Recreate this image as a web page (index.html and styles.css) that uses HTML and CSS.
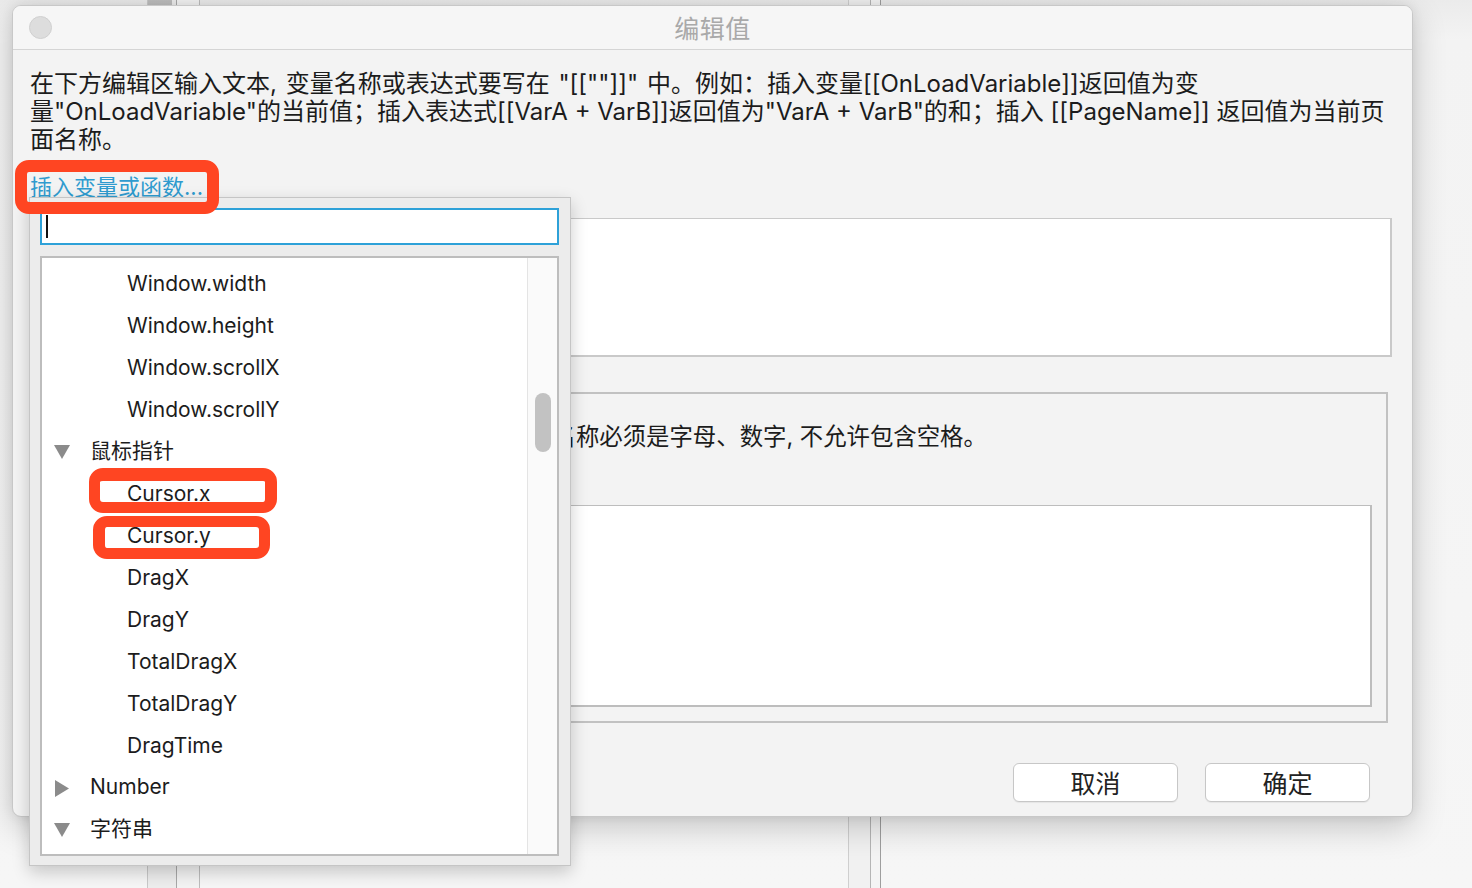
FILE: index.html
```html
<!DOCTYPE html>
<html lang="zh-CN">
<head>
<meta charset="utf-8">
<title>编辑值</title>
<link rel="stylesheet" href="styles.css">
</head>
<body>
<div class="desktop">
  <div class="backwin backwin-a"></div>
  <div class="backwin backwin-b"></div>

  <section class="dialog">
    <header class="titlebar">
      <span class="close-dot"></span>
      <h1 class="title">编辑值</h1>
      <span></span>
    </header>
    <div class="dialog-body">
      <p class="hint">
        <span class="hint-line">在下方编辑区输入文本, 变量名称或表达式要写在 "[[""]]" 中。例如：插入变量[[OnLoadVariable]]返回值为变</span>
        <span class="hint-line">量"OnLoadVariable"的当前值；插入表达式[[VarA + VarB]]返回值为"VarA + VarB"的和；插入 [[PageName]] 返回值为当前页</span>
        <span class="hint-line">面名称。</span>
      </p>
      <a class="insert-link" href="#">插入变量或函数...</a>
      <div class="text-editor"></div>
      <div class="locals">
        <p class="locals-note">在下方创建用于插入变量值的局部变量, 局部变量名称必须是字母、数字, 不允许包含空格。</p>
        <div class="locals-editor"></div>
      </div>
      <div class="actions">
        <button class="btn" type="button">取消</button>
        <button class="btn" type="button">确定</button>
      </div>
    </div>
  </section>

  <div class="picker">
    <div class="search"><span class="caret"></span></div>
    <div class="tree">
      <ul class="tree-rows">
        <li class="row child">Window.width</li>
        <li class="row child">Window.height</li>
        <li class="row child">Window.scrollX</li>
        <li class="row child">Window.scrollY</li>
        <li class="row group"><svg class="twisty" width="16" height="14" viewBox="0 0 16 14"><path d="M0 0H16L8 14Z" fill="#8b8b8b"/></svg><span class="group-label">鼠标指针</span></li>
        <li class="row child">Cursor.x</li>
        <li class="row child">Cursor.y</li>
        <li class="row child">DragX</li>
        <li class="row child">DragY</li>
        <li class="row child">TotalDragX</li>
        <li class="row child">TotalDragY</li>
        <li class="row child">DragTime</li>
        <li class="row group"><svg class="twisty" width="16" height="17" viewBox="0 0 16 17"><path d="M1 0V17L15 8.5Z" fill="#8b8b8b"/></svg><span class="group-label">Number</span></li>
        <li class="row group"><svg class="twisty" width="16" height="14" viewBox="0 0 16 14"><path d="M0 0H16L8 14Z" fill="#8b8b8b"/></svg><span class="group-label">字符串</span></li>
      </ul>
      <div class="scrollbar"><span class="thumb"></span></div>
    </div>
  </div>

  <span class="mark mark-link"></span>
  <span class="mark mark-x"></span>
  <span class="mark mark-y"></span>
</div>
</body>
</html>
```

FILE: styles.css
```css
html, body {
  margin: 0;
  padding: 0;
}

body {
  width: 1472px;
  height: 888px;
  overflow: hidden;
  background: #f5f5f5;
  font-family: Inter, "Noto Sans CJK SC", sans-serif;
  color: #1d1d1d;
}

.desktop {
  position: relative;
  width: 1472px;
  height: 888px;
  background: linear-gradient(180deg, #ebebeb 0, #f3f3f3 40px, #f6f6f6 100%);
}

/* windows of other apps peeking out from behind */
.backwin {
  position: absolute;
  top: 0;
  bottom: 0;
  box-sizing: border-box;
}

.backwin-a {
  left: 147px;
  width: 53px;
  border-left: 1px solid #c9c9c9;
  border-right: 1px solid #bdbdbd;
  background:
    linear-gradient(180deg, rgba(150,150,150,.55) 0 6px, transparent 6px) 0 0 / 24px 100% no-repeat,
    linear-gradient(90deg, #ededed 0 28px, #a8a8a8 28px 29px, #f3f3f3 29px);
}

.backwin-b {
  left: 848px;
  width: 33px;
  border-left: 1px solid #cfcfcf;
  border-right: 1px solid #9e9e9e;
  background: linear-gradient(90deg, #f1f1f1 0 21px, #b5b5b5 21px 22px, #f4f4f4 22px);
}

/* main dialog window */
.dialog {
  position: absolute;
  left: 12px;
  top: 5px;
  width: 1401px;
  height: 812px;
  box-sizing: border-box;
  border: 1px solid #c8c8c8;
  border-radius: 9px;
  background: #f3f3f3;
  box-shadow: 0 10px 34px rgba(0,0,0,.2), 0 0 12px rgba(0,0,0,.08);
  display: flex;
  flex-direction: column;
  overflow: hidden;
}

.titlebar {
  height: 43px;
  flex: none;
  border-bottom: 1px solid #d5d5d5;
  background: #f6f6f6;
  display: grid;
  grid-template-columns: 1fr auto 1fr;
  align-items: center;
}

.close-dot {
  width: 23px;
  height: 23px;
  margin-left: 16px;
  border-radius: 50%;
  background: #dddddd;
  border: 1px solid #d0d0d0;
  box-sizing: border-box;
}

.title {
  margin: 0;
  font-family: "Noto Sans CJK SC", sans-serif;
  font-size: 25px;
  font-weight: 400;
  color: #a9a9a9;
  line-height: 43px;
  letter-spacing: 0.5px;
}

.dialog-body {
  flex: 1;
  display: flex;
  flex-direction: column;
  padding: 20px 20px 0 17px;
  min-height: 0;
}

.hint {
  margin: 0;
  font-size: 24px;
  line-height: 28px;
  color: #1c1c1c;
}

.hint-line {
  display: block;
  white-space: nowrap;
}

.hint-line:first-child {
  word-spacing: 2px;
}

.insert-link {
  align-self: flex-start;
  margin-top: 19px;
  font-size: 22px;
  line-height: 28px;
  color: #2f9bcf;
  text-decoration: underline;
  text-decoration-thickness: 2px;
  text-underline-offset: 3px;
}

.text-editor {
  margin-top: 17px;
  height: 139px;
  flex: none;
  box-sizing: border-box;
  background: #fff;
  border: 2px solid #c9c9c9;
  border-top-width: 1px;
  border-left-width: 1px;
}

.locals {
  margin-top: 35px;
  margin-right: 4px;
  height: 331px;
  flex: none;
  box-sizing: border-box;
  border: 2px solid #c1c1c1;
  padding: 29px 14px 14px 14px;
  display: flex;
  flex-direction: column;
}

.locals-note {
  margin: 0;
  padding-left: 2px;
  font-size: 23.4px;
  line-height: 28px;
  white-space: nowrap;
  color: #1c1c1c;
}

.locals-editor {
  margin-top: 54px;
  flex: 1;
  background: #fff;
  border: 2px solid #bdbdbd;
  border-top-width: 1px;
  border-left-width: 1px;
}

.actions {
  margin-top: 40px;
  padding-right: 22px;
  display: flex;
  justify-content: flex-end;
  gap: 27px;
}

.btn {
  width: 165px;
  height: 39px;
  box-sizing: border-box;
  background: #fff;
  border: 1px solid #c7c7c7;
  border-radius: 6px;
  box-shadow: 0 1px 1px rgba(0,0,0,.06);
  font-family: "Noto Sans CJK SC", sans-serif;
  font-size: 25px;
  line-height: 1;
  color: #222;
  padding: 0;
}

/* variable / function picker popup */
.picker {
  position: absolute;
  left: 29px;
  top: 197px;
  width: 542px;
  height: 669px;
  box-sizing: border-box;
  background: #ececec;
  border: 1px solid #c5c5c5;
  box-shadow: 0 6px 16px rgba(0,0,0,.2);
  padding: 10px 11px 9px 10px;
  display: flex;
  flex-direction: column;
  gap: 11px;
}

.search {
  height: 37px;
  flex: none;
  box-sizing: border-box;
  background: #fff;
  border: 2px solid #2ea1d8;
  display: flex;
  align-items: center;
}

.caret {
  width: 2px;
  height: 23px;
  margin-left: 4px;
  background: #111;
}

.tree {
  flex: 1;
  min-height: 0;
  box-sizing: border-box;
  background: #fff;
  border: 2px solid #bdbdbd;
  display: flex;
  overflow: hidden;
}

.tree-rows {
  list-style: none;
  margin: 0;
  padding: 5px 0 0;
  flex: 1;
}

.row {
  height: 42px;
  display: flex;
  align-items: center;
  font-size: 21px;
  line-height: 26px;
  color: #1c1c1c;
  white-space: nowrap;
}

.row.child {
  padding-left: 85px;
}

.row.group {
  padding-left: 12px;
  padding-bottom: 3px;
  box-sizing: border-box;
}

.twisty {
  flex: none;
  margin-top: 3px;
}

.group-label {
  margin-left: 20px;
}

.scrollbar {
  width: 30px;
  flex: none;
  box-sizing: border-box;
  background: #fafafa;
  border-left: 1px solid #e4e4e4;
  padding-top: 135px;
  display: flex;
  justify-content: center;
  align-items: flex-start;
}

.thumb {
  width: 16px;
  height: 59px;
  border-radius: 8px;
  background: #c2c2c2;
}

/* highlight outlines drawn on top */
.mark {
  position: absolute;
  box-sizing: border-box;
  border: 12px solid #ff4522;
  border-radius: 14px;
}

.mark-link {
  left: 15px;
  top: 160px;
  width: 204px;
  height: 54px;
}

.mark-x {
  left: 89px;
  top: 468px;
  width: 188px;
  height: 45px;
  border-width: 13px 12px 11px 11px;
}

.mark-y {
  left: 93px;
  top: 516px;
  width: 177px;
  height: 43px;
  border-width: 11px 11px 11px 12px;
}
```
